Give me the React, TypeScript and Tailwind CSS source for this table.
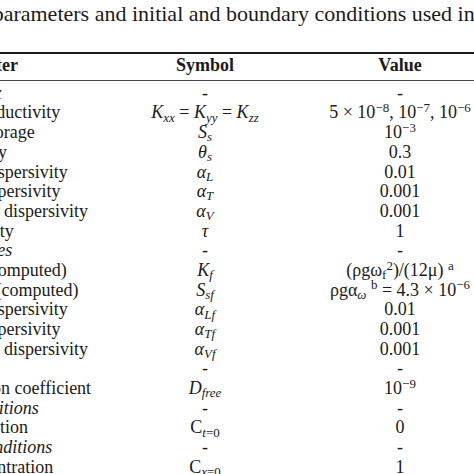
import React from 'react';

type Row = {
  label: string;
  italicLabel?: boolean;
  symbol: React.ReactNode;
  value: React.ReactNode;
};

const Sub = ({ children }: { children: React.ReactNode }) => (
  <sub className="text-[72%] italic">{children}</sub>
);

const Exp = ({ children }: { children: React.ReactNode }) => (
  <sup className="text-[72%]">{children}</sup>
);

const rows: Row[] = [
  { label: 'Matrix', italicLabel: true, symbol: '-', value: '-' },
  {
    label: 'Hydraulic conductivity',
    symbol: (
      <span>
        <i>K</i><Sub>xx</Sub> = <i>K</i><Sub>yy</Sub> = <i>K</i><Sub>zz</Sub>
      </span>
    ),
    value: (
      <span>
        5 × 10<Exp>−8</Exp>, 10<Exp>−7</Exp>, 10<Exp>−6</Exp>
      </span>
    ),
  },
  { label: 'Specific storage', symbol: <span><i>S</i><Sub>s</Sub></span>, value: <span>10<Exp>−3</Exp></span> },
  { label: 'Porosity', symbol: <span><i>θ</i><Sub>s</Sub></span>, value: '0.3' },
  { label: 'Longitudinal dispersivity', symbol: <span><i>α</i><Sub>L</Sub></span>, value: '0.01' },
  { label: 'Transverse dispersivity', symbol: <span><i>α</i><Sub>T</Sub></span>, value: '0.001' },
  { label: 'Vertical transverse dispersivity', symbol: <span><i>α</i><Sub>V</Sub></span>, value: '0.001' },
  { label: 'Tortuosity', symbol: <i>τ</i>, value: '1' },
  { label: 'Fractures', italicLabel: true, symbol: '-', value: '-' },
  {
    label: 'Permeability (computed)',
    symbol: <span><i>K</i><Sub>f</Sub></span>,
    value: (
      <span>
        (ρgω<sub className="text-[72%]">f</sub><Exp>2</Exp>)/(12μ) <Exp>a</Exp>
      </span>
    ),
  },
  {
    label: 'Specific storage (computed)',
    symbol: <span><i>S</i><Sub>sf</Sub></span>,
    value: (
      <span>
        ρgα<Sub>ω</Sub> <Exp>b</Exp> = 4.3 × 10<Exp>−6</Exp>
      </span>
    ),
  },
  { label: 'Longitudinal dispersivity', symbol: <span><i>α</i><Sub>Lf</Sub></span>, value: '0.01' },
  { label: 'Transverse dispersivity', symbol: <span><i>α</i><Sub>Tf</Sub></span>, value: '0.001' },
  { label: 'Vertical transverse dispersivity', symbol: <span><i>α</i><Sub>Vf</Sub></span>, value: '0.001' },
  { label: 'Solute', italicLabel: true, symbol: '-', value: '-' },
  { label: 'Free-water diffusion coefficient', symbol: <span><i>D</i><Sub>free</Sub></span>, value: <span>10<Exp>−9</Exp></span> },
  { label: 'Initial conditions', italicLabel: true, symbol: '-', value: '-' },
  {
    label: 'Concentration',
    symbol: (
      <span>
        C<sub className="text-[72%]"><i>t</i>=0</sub>
      </span>
    ),
    value: '0',
  },
  { label: 'Boundary conditions', italicLabel: true, symbol: '-', value: '-' },
  {
    label: 'Source concentration',
    symbol: (
      <span>
        C<sub className="text-[72%]"><i>x</i>=0</sub>
      </span>
    ),
    value: '1',
  },
];

export default function App() {
  return (
    <div className="w-[474px] h-[474px] overflow-hidden bg-white text-[#1c1a1a] font-['Liberation_Serif',serif]">
      <div className="-ml-[161px] w-[666px]">
        <div className="pt-[1px] text-[22px] leading-[26px] whitespace-nowrap">
          Table A1. Model parameters and initial and boundary conditions used in the simulations.
        </div>

        <div className="mt-[25px] h-[2px] bg-[#1c1a1a]" />

        <div className="grid grid-cols-[276px_180px_210px] pt-[1.7px] pb-[4.3px] text-[18px] leading-[19.7px] font-bold text-center">
          <div>Parameter</div>
          <div>Symbol</div>
          <div>Value</div>
        </div>
        <div className="h-px bg-[#4a4848]" />

        <div className="pt-[3.1px] text-[18px] leading-[19.7px]">
          {rows.map((row, i) => (
            <div key={i} className="grid grid-cols-[276px_180px_210px] h-[19.7px] whitespace-nowrap text-center">
              <div className={row.italicLabel ? 'italic' : ''}>{row.label}</div>
              <div>{row.symbol}</div>
              <div>{row.value}</div>
            </div>
          ))}
        </div>
      </div>
    </div>
  );
}
